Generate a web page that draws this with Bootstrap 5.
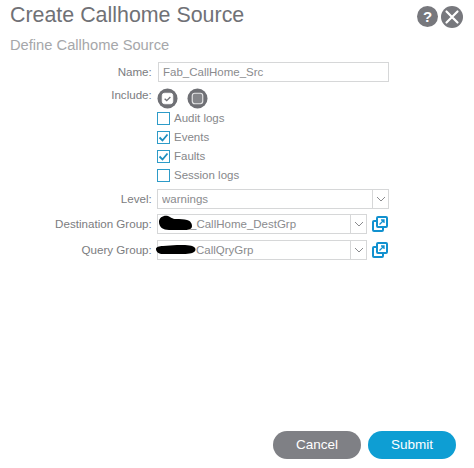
<!DOCTYPE html>
<html lang="en">
<head>
<meta charset="utf-8">
<title>Create Callhome Source</title>
<link rel="stylesheet" href="https://cdn.jsdelivr.net/npm/bootstrap@5.3.0/dist/css/bootstrap.min.css">
<style>
html,body{height:100%;margin:0}
body{background:#fff;font-family:"Liberation Sans",Arial,sans-serif;color:#6f7074;overflow:hidden}
.dlg{height:468px;padding:0 18px 9px 10px}
.dlg-head{height:37px;padding-top:0}
.dlg-title{font-size:21.4px;font-weight:400;color:#707176;line-height:30px;margin:0}
.head-icons{margin-top:6px;margin-right:-7px;gap:3px}
.sub{font-size:14.700px;line-height:16px;color:#a6a7aa;height:25px}
.form-area{width:379px}
.frow{display:flex;align-items:center}
.flabel{width:148px;flex:none;text-align:right;font-size:11.6px;color:#7b7c80;line-height:14px;padding-right:3px;white-space:nowrap}
.fbox{border:1px solid #d6d7d8;height:20px;background:#fff;font-size:11.5px;color:#8a8b8e;line-height:18px;padding-left:4px;display:flex;align-items:stretch;position:relative;box-sizing:border-box}
.fbox-txt{flex:1;white-space:nowrap;overflow:hidden}
.fcaret{width:16px;flex:none;border-left:1px solid #d6d7d8;display:flex;align-items:center;justify-content:center}
.r-name{height:20px}
.r-name .fbox{width:232px}
.r-inc{height:22px;margin-top:6px;align-items:flex-start}
.inc-icons{margin-left:-1px;gap:9px}
.checks{margin-left:147px;margin-top:-1px;height:76px}
.chk-row{height:19px;font-size:11.5px;color:#86878a;gap:4px}
.chk-box{width:13px;height:13px;border:1px solid #2d9bc8;background:#fff;flex:none;display:flex;align-items:center;justify-content:center}
.r-level{margin-top:4px}
.r-level .fbox{width:232px;margin-left:-1px}
.r-dest{margin-top:5px}
.r-qry{margin-top:6px}
.r-dest .fbox,.r-qry .fbox{width:210px;margin-left:-1px}
.ext{margin-left:5px;flex:none}
.blot{position:absolute}
.blot-a{left:0;top:0}
.blot-b{left:-3px;top:4px}
.txt-a{padding-left:28px}
.txt-b{padding-left:34px}
.foot{margin-top:auto;gap:7px}
.b-pill{width:88px;height:28px;border-radius:14px;border:0;padding:0;font-size:13.5px;line-height:28px;color:#fff;text-align:center}
.b-cancel{background:#7f8085}
.b-cancel:hover{background:#7f8085;color:#fff}
.b-submit{background:#0e9ed3}
.b-submit:hover{background:#0e9ed3;color:#fff}
</style>
</head>
<body>
<div class="dlg d-flex flex-column">
  <div class="dlg-head d-flex justify-content-between align-items-start">
    <h1 class="dlg-title">Create Callhome Source</h1>
    <div class="head-icons d-flex">
      <svg width="21" height="21" viewBox="0 0 21 21" aria-label="Help"><circle cx="10.5" cy="10.5" r="10.5" fill="#77787d"/><text x="10.5" y="16" text-anchor="middle" font-family="Liberation Sans" font-weight="700" font-size="15" fill="#fff">?</text></svg>
      <svg width="22" height="22" viewBox="0 0 22 22" aria-label="Close"><circle cx="11" cy="11" r="11" fill="#77787d"/><path d="M5.500 5.500l11 11M16.500 5.500l-11 11" stroke="#fff" stroke-width="2.200" stroke-linecap="round"/></svg>
    </div>
  </div>
  <div class="sub">Define Callhome Source</div>
  <div class="form-area">
    <div class="frow r-name"><div class="flabel">Name:&nbsp;</div><div class="fbox"><span class="fbox-txt">Fab_CallHome_Src</span></div></div>
    <div class="frow r-inc"><div class="flabel">Include:&nbsp;</div>
      <div class="inc-icons d-flex">
        <svg width="21" height="21" viewBox="0 0 22 22" aria-label="Select all"><circle cx="11" cy="11" r="10.500" fill="#6f7075"/><rect x="5.500" y="5.500" width="11" height="11" rx="2.500" fill="#fff" stroke="#fff"/><path d="M8 11.200l2.200 2 3.800-3.800" fill="none" stroke="#6f7075" stroke-width="1.400"/></svg>
        <svg width="21" height="21" viewBox="0 0 22 22" aria-label="Select none"><circle cx="11" cy="11" r="10.500" fill="#6f7075"/><rect x="5.500" y="5.500" width="11" height="11" rx="2.500" fill="#85868a" stroke="#e6e6e7" stroke-width="1.200"/></svg>
      </div>
    </div>
    <div class="checks">
      <div class="chk-row d-flex align-items-center"><span class="chk-box"></span><span>Audit logs</span></div>
      <div class="chk-row d-flex align-items-center"><span class="chk-box"><svg width="11" height="11" viewBox="0 0 11 11"><path d="M1.500 5.500l3 3 5-6" fill="none" stroke="#1e8fc0" stroke-width="1.800"/></svg></span><span>Events</span></div>
      <div class="chk-row d-flex align-items-center"><span class="chk-box"><svg width="11" height="11" viewBox="0 0 11 11"><path d="M1.500 5.500l3 3 5-6" fill="none" stroke="#1e8fc0" stroke-width="1.800"/></svg></span><span>Faults</span></div>
      <div class="chk-row d-flex align-items-center"><span class="chk-box"></span><span>Session logs</span></div>
    </div>
    <div class="frow r-level"><div class="flabel">Level:&nbsp;</div><div class="fbox"><span class="fbox-txt">warnings</span><span class="fcaret"><svg width="10" height="6" viewBox="0 0 10 6"><path d="M1 1l4 4 4-4" fill="none" stroke="#8a8b8e"/></svg></span></div></div>
    <div class="frow r-dest"><div class="flabel">Destination Group:&nbsp;</div><div class="fbox"><span class="fbox-txt txt-a">_CallHome_DestGrp</span><svg class="blot blot-a" width="35" height="16" viewBox="0 0 35 16"><path d="M1 7C1 2 6 0 10 1c3 1 4 3 8 3 4 0 8 0 11 1 4 1 5 4 5 6 0 3-3 4-7 4H11C5 15 1 12 1 7z" fill="#000"/></svg><span class="fcaret"><svg width="10" height="6" viewBox="0 0 10 6"><path d="M1 1l4 4 4-4" fill="none" stroke="#8a8b8e"/></svg></span></div>
      <svg class="ext" width="16" height="16" viewBox="0 0 16 16" aria-label="Open"><rect x="1" y="5" width="10" height="10" rx="1" fill="none" stroke="#1191cf" stroke-width="2"/><rect x="5" y="1" width="10" height="10" rx="1" fill="#fff" stroke="#1191cf" stroke-width="2"/><path d="M7.500 8.500l4.500-4.500M9 4h3v3" fill="none" stroke="#1191cf" stroke-width="1.300"/></svg>
    </div>
    <div class="frow r-qry"><div class="flabel">Query Group:&nbsp;</div><div class="fbox"><span class="fbox-txt txt-b">CallQryGrp</span><svg class="blot blot-b" width="41" height="9" viewBox="0 0 41 9"><path d="M1 4c0-2 3-3 7-3l14-1c8 0 14 0 17 2 2 1 2 4 0 5-3 2-9 2-15 2H8C4 9 1 7 1 4z" fill="#000"/></svg><span class="fcaret"><svg width="10" height="6" viewBox="0 0 10 6"><path d="M1 1l4 4 4-4" fill="none" stroke="#8a8b8e"/></svg></span></div>
      <svg class="ext" width="16" height="16" viewBox="0 0 16 16" aria-label="Open"><rect x="1" y="5" width="10" height="10" rx="1" fill="none" stroke="#1191cf" stroke-width="2"/><rect x="5" y="1" width="10" height="10" rx="1" fill="#fff" stroke="#1191cf" stroke-width="2"/><path d="M7.500 8.500l4.500-4.500M9 4h3v3" fill="none" stroke="#1191cf" stroke-width="1.300"/></svg>
    </div>
  </div>
  <div class="foot d-flex justify-content-end">
    <button type="button" class="btn b-pill b-cancel">Cancel</button>
    <button type="button" class="btn b-pill b-submit">Submit</button>
  </div>
</div>
<script src="https://cdn.jsdelivr.net/npm/bootstrap@5.3.0/dist/js/bootstrap.bundle.min.js"></script>
</body>
</html>
